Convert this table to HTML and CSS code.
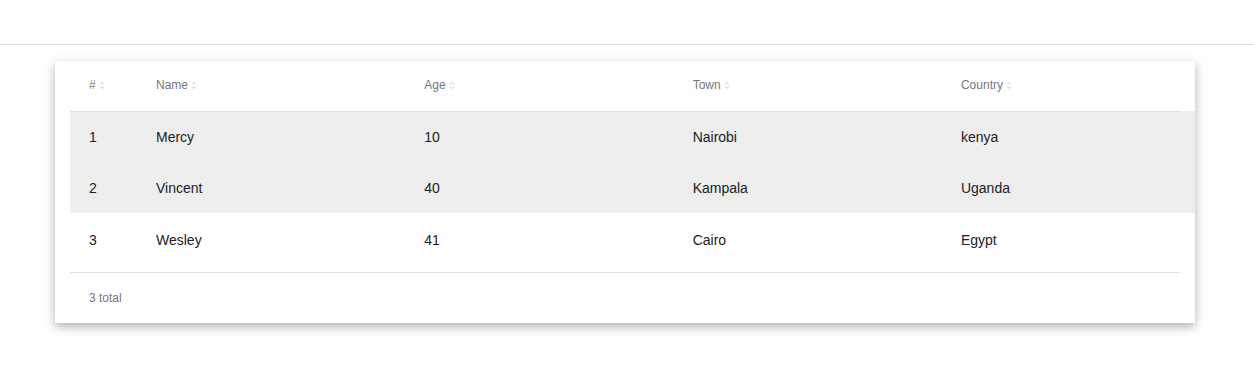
FILE: index.html
```html
<!DOCTYPE html>
<html>
<head>
<meta charset="utf-8">
<link rel="stylesheet" href="styles.css">
</head>
<body>
<div class="topbar"></div>
<main class="main">
  <div class="card">
    <table class="table">
      <colgroup>
        <col class="c-num"><col class="c-col"><col class="c-col"><col class="c-col"><col class="c-last">
      </colgroup>
      <thead>
        <tr>
          <th># <svg class="sort" viewBox="0 0 6 9"><path d="M1 3.5L3 1.5L5 3.5M1 5.5L3 7.5L5 5.5"/></svg></th>
          <th>Name <svg class="sort" viewBox="0 0 6 9"><path d="M1 3.5L3 1.5L5 3.5M1 5.5L3 7.5L5 5.5"/></svg></th>
          <th>Age <svg class="sort" viewBox="0 0 6 9"><path d="M1 3.5L3 1.5L5 3.5M1 5.5L3 7.5L5 5.5"/></svg></th>
          <th>Town <svg class="sort" viewBox="0 0 6 9"><path d="M1 3.5L3 1.5L5 3.5M1 5.5L3 7.5L5 5.5"/></svg></th>
          <th>Country <svg class="sort" viewBox="0 0 6 9"><path d="M1 3.5L3 1.5L5 3.5M1 5.5L3 7.5L5 5.5"/></svg></th>
        </tr>
      </thead>
      <tbody>
        <tr class="hl"><td>1</td><td>Mercy</td><td>10</td><td>Nairobi</td><td>kenya</td></tr>
        <tr class="hl"><td>2</td><td>Vincent</td><td>40</td><td>Kampala</td><td>Uganda</td></tr>
        <tr class="last"><td>3</td><td>Wesley</td><td>41</td><td>Cairo</td><td>Egypt</td></tr>
      </tbody>
    </table>
    <div class="footer">3 total</div>
  </div>
</main>
</body>
</html>
```

FILE: styles.css
```css
* { box-sizing: border-box; }
html, body { margin: 0; padding: 0; background: #fff; }
body { font-family: "Liberation Sans", Arial, sans-serif; color: #212121; }
.topbar { height: 45px; border-bottom: 1px solid #e0e0e0; }
.main { padding: 16px 59px 60px 55px; }
.card {
  width: 1140px;
  background: #fff;
  box-shadow: 0 4px 8px rgba(0,0,0,0.2), 0 3px 14px rgba(0,0,0,0.12);
  overflow: hidden;
  padding: 0 15px;
}
.table { border-collapse: collapse; width: 1110px; table-layout: fixed; }
.c-num { width: 67px; }
.c-col { width: 268.3px; }
.c-last { width: 238px; }
th {
  text-align: left;
  font-weight: 400;
  font-size: 12px;
  color: #77777f;
  height: 50px;
  padding: 0 0 1px 19px;
  border-bottom: 1px solid #e0e0e0;
  white-space: nowrap;
}
.sort { width: 6px; height: 9px; vertical-align: -1px; margin-left: 0; fill: none; stroke: #c4c4c4; stroke-width: 0.9; }
td { font-size: 14px; height: 51px; padding: 0 0 0 19px; }
tr.hl td { background: #eeeeee; }
tr.hl td:last-child { box-shadow: 15px 0 0 #eeeeee; }
tr.last td { height: 59px; padding-bottom: 5px; border-bottom: 1px solid #e0e0e0; }
.footer { height: 50px; padding: 0 0 0 19px; display: flex; align-items: center; font-size: 12px; color: #77777f; }
```
